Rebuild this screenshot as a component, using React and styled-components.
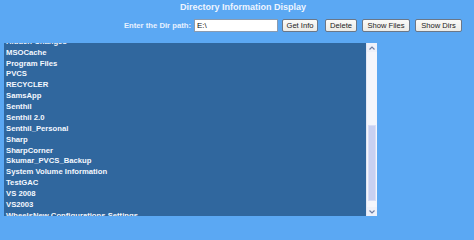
import styled, { createGlobalStyle } from "styled-components";

const GlobalStyle = createGlobalStyle`
  html, body {
    margin: 0;
    padding: 0;
    background: #5ba8f3;
    font-family: "Liberation Sans", Arial, sans-serif;
  }
`;

const Page = styled.div`
  width: 474px;
  height: 220px;
  overflow: hidden;
  display: flex;
  flex-direction: column;
  background: #5ba8f3;
`;

const Title = styled.div`
  padding: 2px 0 0 12px;
  height: 11px;
  line-height: 11px;
  text-align: center;
  font-size: 9px;
  font-weight: bold;
  color: #eef5ff;
`;

const Controls = styled.div`
  margin-top: 6px;
  height: 13px;
  display: flex;
  align-items: center;
  justify-content: flex-end;
  padding-right: 12px;
`;

const Label = styled.span`
  font-size: 7.7px;
  font-weight: bold;
  color: #e8f1ff;
  margin-right: 3px;
`;

const PathInput = styled.input`
  box-sizing: border-box;
  width: 84px;
  height: 13px;
  margin: 0 4px 0 0;
  padding: 0 2px;
  border: 1px solid #8a9bb0;
  background: #fff;
  font-family: "Liberation Sans", Arial, sans-serif;
  font-size: 8px;
  color: #111;
  outline: none;
`;

const Button = styled.button`
  box-sizing: border-box;
  width: ${({ w }) => w}px;
  height: 13px;
  margin-left: ${({ gap }) => gap}px;
  padding: 0;
  border: 1px solid #6b7787;
  border-radius: 2px;
  background: linear-gradient(#fafaf8, #ecebe6);
  font-family: "Liberation Sans", Arial, sans-serif;
  font-size: 7.6px;
  color: #222;
  cursor: pointer;
`;

const ListBox = styled.div`
  margin: 11px 0 0 4px;
  width: 373px;
  height: 173px;
  display: flex;
  background: #30679e;
  overflow: hidden;
`;

const Items = styled.div`
  flex: 1;
  overflow: hidden;
`;

const ItemsInner = styled.div`
  transform: translateY(-${({ offset }) => offset}px);
`;

const Item = styled.div`
  height: 10.88px;
  line-height: 10.88px;
  padding-left: 2px;
  font-size: 7.7px;
  font-weight: bold;
  color: #f4f8ff;
  white-space: nowrap;
`;

const ScrollBar = styled.div`
  width: 10px;
  display: flex;
  flex-direction: column;
  background: #f4f6fc;
  border-left: 1px solid #e2e7f4;
`;

const Arrow = styled.div`
  height: 9px;
  display: flex;
  align-items: center;
  justify-content: center;
  background: #eef1fa;
`;

const Track = styled.div`
  flex: 1;
  display: flex;
  flex-direction: column;
  padding: 0 1px;
`;

const Thumb = styled.div`
  margin-top: ${({ top }) => top}px;
  height: ${({ size }) => size}px;
  background: #c8d0f1;
  border: 1px solid #d8def6;
  box-sizing: border-box;
`;

const Chevron = ({ up }) => (
  <svg width="6" height="4" viewBox="0 0 6 4">
    <path
      d={up ? "M0.5 3.5 L3 1 L5.5 3.5" : "M0.5 0.5 L3 3 L5.5 0.5"}
      fill="none"
      stroke="#6f7ea3"
      strokeWidth="1.2"
    />
  </svg>
);

const dirs = [
  "Documents and Settings",
  "Drivers",
  "Hidden Changes",
  "MSOCache",
  "Program Files",
  "PVCS",
  "RECYCLER",
  "SamsApp",
  "Senthil",
  "Senthil 2.0",
  "Senthil_Personal",
  "Sharp",
  "SharpCorner",
  "Skumar_PVCS_Backup",
  "System Volume Information",
  "TestGAC",
  "VS 2008",
  "VS2003",
  "WheelsNew Configurations Settings",
];

const ROW = 10.88;

export default function App() {
  // list is scrolled so "Hidden Changes" is half cut at the top
  const offset = 2 * ROW + 6.4;

  return (
    <>
      <GlobalStyle />
      <Page>
        <Title>Directory Information Display</Title>
        <Controls>
          <Label>Enter the Dir path:</Label>
          <PathInput defaultValue="E:\" />
          <Button w={36} gap={0}>Get Info</Button>
          <Button w={32} gap={7}>Delete</Button>
          <Button w={48} gap={5}>Show Files</Button>
          <Button w={47} gap={5}>Show Dirs</Button>
        </Controls>
        <ListBox>
          <Items>
            <ItemsInner offset={offset}>
              {dirs.map((d) => (
                <Item key={d}>{d}</Item>
              ))}
            </ItemsInner>
          </Items>
          <ScrollBar>
            <Arrow>
              <Chevron up />
            </Arrow>
            <Track>
              <Thumb top={73} size={76} />
            </Track>
            <Arrow>
              <Chevron />
            </Arrow>
          </ScrollBar>
        </ListBox>
      </Page>
    </>
  );
}
